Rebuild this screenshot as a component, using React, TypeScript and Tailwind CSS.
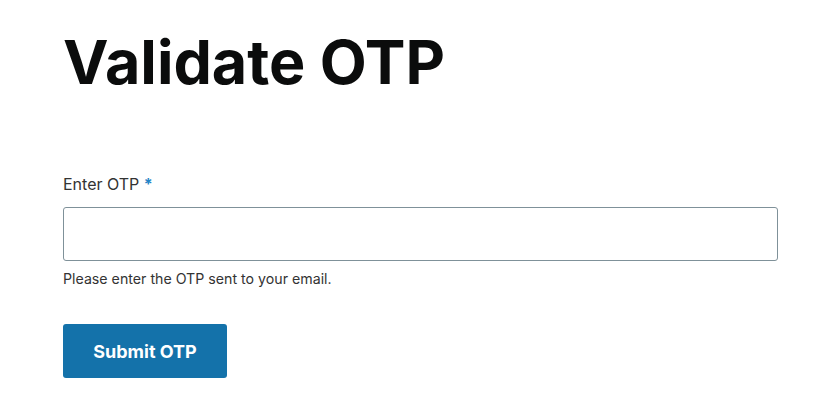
import React from 'react';

const App: React.FC = () => {
  return (
    <div className="min-h-screen bg-white font-['Inter',sans-serif] text-[#1b1b1b]">
      <main className="pl-[63px] pr-[48px] pt-[22px]">
        <h1 className="text-[61px] font-bold leading-[80px] text-[#0b0c0c]">Validate OTP</h1>

        <form className="mt-[72px] flex flex-col" onSubmit={(e) => e.preventDefault()}>
          <label htmlFor="otp" className="text-[16px] leading-[20px] text-[#333]">
            Enter OTP <span className="text-[#2384c6] font-bold">*</span>
          </label>
          <input
            id="otp"
            type="text"
            className="mt-[13px] h-[54px] w-[715px] rounded-[3px] border border-[#7f9199] px-3 text-[15px] outline-none"
          />
          <p className="mt-[9px] text-[14.2px] leading-[18px] text-[#333]">Please enter the OTP sent to your email.</p>

          <button
            type="submit"
            className="mt-[36px] h-[54px] w-[164px] rounded-[3px] bg-[#1472aa] text-[18px] font-bold text-white"
          >
            Submit OTP
          </button>
        </form>
      </main>
    </div>
  );
};

export default App;
